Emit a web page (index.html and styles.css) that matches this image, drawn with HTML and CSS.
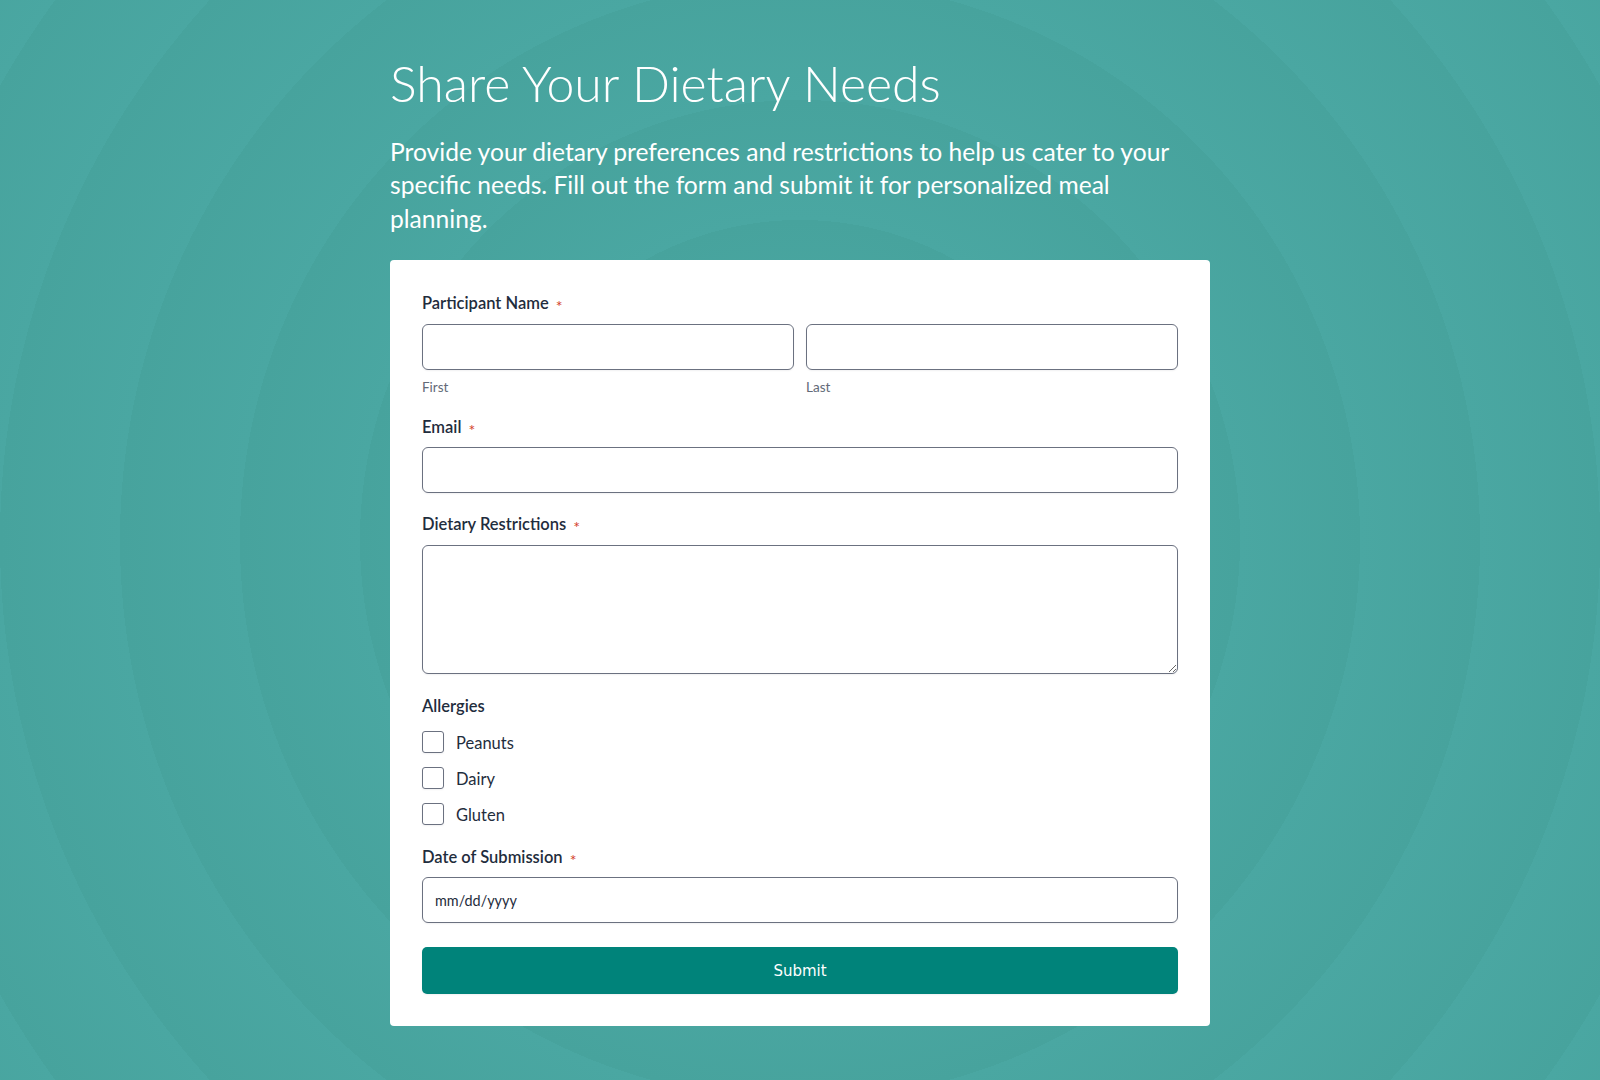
FILE: index.html
```html
<!DOCTYPE html>
<html lang="en">
<head>
<meta charset="utf-8">
<title>Share Your Dietary Needs</title>
<link rel="stylesheet" href="styles.css">
</head>
<body>
<main class="page">
  <h1 class="title">Share Your Dietary Needs</h1>
  <p class="intro">Provide your dietary preferences and restrictions to help us cater to your specific needs. Fill out the form and submit it for personalized meal planning.</p>
  <form class="card">
    <div class="field">
      <label class="label">Participant Name <span class="req">*</span></label>
      <div class="name-row">
        <div class="name-col">
          <input class="input" type="text">
          <span class="sublabel">First</span>
        </div>
        <div class="name-col">
          <input class="input" type="text">
          <span class="sublabel">Last</span>
        </div>
      </div>
    </div>
    <div class="field">
      <label class="label">Email <span class="req">*</span></label>
      <input class="input" type="email">
    </div>
    <div class="field field-wide">
      <label class="label">Dietary Restrictions <span class="req">*</span></label>
      <textarea class="input textarea"></textarea>
    </div>
    <div class="field">
      <label class="label label-plain">Allergies</label>
      <div class="checks">
        <label class="check"><input type="checkbox" class="box"><span>Peanuts</span></label>
        <label class="check"><input type="checkbox" class="box"><span>Dairy</span></label>
        <label class="check"><input type="checkbox" class="box"><span>Gluten</span></label>
      </div>
    </div>
    <div class="field">
      <label class="label">Date of Submission <span class="req">*</span></label>
      <input class="input date" type="text" placeholder="mm/dd/yyyy">
    </div>
    <button type="button" class="submit">Submit</button>
  </form>
</main>
</body>
</html>
```
FILE: styles.css
```css
html, body {
  margin: 0;
  padding: 0;
}
body {
  min-height: 100vh;
  font-family: "Lato", "Noto Sans", sans-serif;
  background-color: #49a6a1;
  background-image: repeating-radial-gradient(circle at 800px 540px, #4aa7a2 80px, #47a39d 200px);
}
.page {
  width: 820px;
  margin: 0 auto;
  padding: 55px 0 55px;
}
.title {
  margin: 0 0 22px;
  font-size: 50px;
  line-height: 57.6px;
  font-weight: 300;
  color: #ffffff;
}
.intro {
  max-width: 800px;
  margin: 0 0 25px;
  font-size: 24.6px;
  line-height: 33.6px;
  font-weight: 400;
  color: #ffffff;
}
.card {
  background: #ffffff;
  border-radius: 4px;
  padding: 32px;
  display: flex;
  flex-direction: column;
}
.field {
  display: flex;
  flex-direction: column;
  margin-bottom: 20px;
}
.field-wide {
  margin-bottom: 21.5px;
}
.label {
  font-size: 16.5px;
  line-height: 22.4px;
  font-weight: 600;
  color: #1f2d3d;
  margin-bottom: 9px;
}
.label-plain {
  margin-bottom: 12px;
}
.req {
  color: #d3402a;
  font-size: 16px;
  line-height: 0;
  font-weight: 400;
  margin-left: 3px;
  vertical-align: -3px;
}
.name-row {
  display: flex;
  gap: 12px;
}
.name-col {
  flex: 1;
  display: flex;
  flex-direction: column;
}
.input {
  box-sizing: border-box;
  width: 100%;
  height: 46px;
  border: 1px solid #6b7180;
  border-radius: 6px;
  background: #ffffff;
  padding: 0 12px;
  font-family: "Lato", sans-serif;
  font-size: 14.4px;
  color: #1f2d3d;
  box-shadow: 0 1px 2px rgba(16, 24, 40, 0.06);
  outline: none;
}
.textarea {
  height: 129px;
  padding: 10px 12px;
  resize: vertical;
  display: block;
}
.date::placeholder {
  color: #1f2d3d;
  opacity: 1;
}
.sublabel {
  margin-top: 8px;
  font-size: 13.5px;
  line-height: 18.2px;
  color: #626a78;
}
.checks {
  display: flex;
  flex-direction: column;
  gap: 12px;
}
.check {
  display: flex;
  align-items: center;
  height: 24px;
  font-size: 16.5px;
  color: #1f2d3d;
}
.check span {
  position: relative;
  top: 1px;
}
.box {
  appearance: none;
  -webkit-appearance: none;
  box-sizing: border-box;
  width: 22px;
  height: 22px;
  margin: 0 12px 0 0;
  border: 1px solid #6b7180;
  border-radius: 3px;
  background: #ffffff;
  box-shadow: 0 1px 2px rgba(16, 24, 40, 0.06);
}
.submit {
  margin-top: 4px;
  height: 47px;
  width: 100%;
  border: none;
  border-radius: 5px;
  background: #00837a;
  color: #ffffff;
  font-family: "DejaVu Sans", sans-serif;
  font-size: 15px;
  box-shadow: 0 1px 2px rgba(16, 24, 40, 0.06);
}
```
